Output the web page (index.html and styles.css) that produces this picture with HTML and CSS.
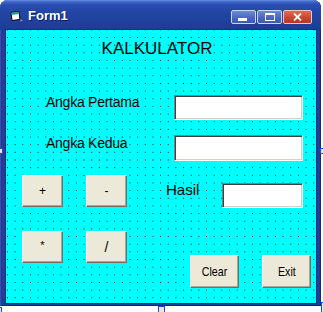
FILE: index.html
```html
<!DOCTYPE html>
<html>
<head>
<meta charset="utf-8">
<title>Form1</title>
<link rel="stylesheet" href="styles.css">
</head>
<body>
<div class="window">
  <div class="titlebar">
    <svg class="app-icon" width="14" height="11" viewBox="0 0 14 11">
      <path d="M1 1.5 L9 0.5 L10 8.5 L2 9.5 Z" fill="#fff" stroke="#000" stroke-width="1"/>
      <path d="M1.2 1.6 L9 0.7 L9.3 3 L1.5 4 Z" fill="#2a9a9a"/>
      <path d="M10.5 8 L13 9.5 L10.5 10.5 Z" fill="#9a9a9a"/>
    </svg>
    <span class="title">Form1</span>
    <div class="caption-btns">
      <div class="cbtn cbtn-min"><span class="glyph-min"></span></div>
      <div class="cbtn cbtn-max"><span class="glyph-max"></span></div>
      <div class="cbtn cbtn-close">
        <svg width="9" height="8" viewBox="0 0 9 8"><path d="M1 0.5 L8 7.5 M8 0.5 L1 7.5" stroke="#fff" stroke-width="1.8"/></svg>
      </div>
    </div>
  </div>
  <div class="client">
    <div class="heading">KALKULATOR</div>
    <div class="row r1">
      <span class="lbl lbl-angka">Angka Pertama</span>
      <div class="tb tb-wide tb-first"></div>
    </div>
    <div class="row r2">
      <span class="lbl lbl-angka">Angka Kedua</span>
      <div class="tb tb-wide tb-tall"></div>
    </div>
    <div class="row r3">
      <button class="btn op">+</button>
      <button class="btn op op-second">-</button>
      <span class="lbl hasil">Hasil</span>
      <div class="tb tb-short"></div>
    </div>
    <div class="row r4">
      <button class="btn op op-star">*</button>
      <button class="btn op op-second op-slash">/</button>
      <button class="btn cmd cmd-clear"><span class="narrow">Clear</span></button>
      <button class="btn cmd cmd-exit"><span class="narrow">Exit</span></button>
    </div>
  </div>
</div>
<div class="handle h-left"></div>
<div class="handle h-right"></div>
<div class="handle h-bottom"></div>
<div class="handle h-bl"></div>
<div class="handle h-br"></div>
</body>
</html>
```
FILE: styles.css
```css
html, body {
  margin: 0;
  padding: 0;
}
body {
  width: 323px;
  height: 312px;
  background: #ffffff;
  position: relative;
  overflow: hidden;
  font-family: "Liberation Sans", Arial, sans-serif;
}
.window {
  width: 321px;
  height: 306px;
  background: #203e98;
  border-radius: 8px 8px 0 0;
  display: flex;
  flex-direction: column;
  box-shadow: inset 1px 0 0 #2f51b0, inset -1px 0 0 #142c78, inset 0 -1px 0 #142c78;
}
.titlebar {
  height: 30px;
  flex: none;
  display: flex;
  align-items: flex-start;
  padding: 0 9px 0 10px;
  border-radius: 8px 8px 0 0;
  background: linear-gradient(to bottom, #6b8fe2 0px, #3c63c8 2px, #2a4db0 5px, #2246a4 12px, #1f409c 22px, #1d3c95 30px);
}
.app-icon {
  margin-top: 11px;
  flex: none;
}
.title {
  margin-top: 8px;
  margin-left: 4px;
  color: #ffffff;
  font-weight: bold;
  font-size: 13px;
  line-height: 15px;
  text-shadow: 1px 1px 0 #0a1e5a;
}
.caption-btns {
  margin-left: auto;
  margin-top: 10px;
  display: flex;
  gap: 1px;
}
.cbtn {
  height: 12px;
  width: 23px;
  border: 1px solid #c9d5f2;
  border-radius: 2px;
  background: linear-gradient(to bottom, #6d8ad6, #4765bd 60%, #3d5bb3);
  display: flex;
  align-items: center;
  justify-content: center;
  position: relative;
}
.cbtn-close {
  width: 27px;
  border-color: #f0c8c0;
  background: linear-gradient(to bottom, #e06a55, #c8442f 60%, #b53726);
}
.glyph-min {
  position: absolute;
  left: 6px;
  top: 7px;
  width: 9px;
  height: 3px;
  background: #ffffff;
}
.glyph-max {
  width: 8px;
  height: 5px;
  border: 1px solid #ffffff;
  border-top-width: 2px;
}
.client {
  flex: 1;
  margin: 0 5px 3px 6px;
  background-color: #00ffff;
  background-image: radial-gradient(circle at 0.5px 0.5px, #000 0.6px, transparent 0.7px);
  background-size: 7.67px 7.67px;
  background-position: 1px 7px;
  box-shadow: 0 0 0 1px #142c78;
  display: flex;
  flex-direction: column;
}
.heading {
  margin-top: 9px;
  height: 20px;
  line-height: 20px;
  font-size: 17px;
  text-align: center;
  padding-right: 8px;
  color: #000;
}
.row {
  display: flex;
  align-items: flex-start;
}
.r1 { margin-top: 35px; }
.r2 { margin-top: 15px; }
.r3 { margin-top: 14px; }
.r4 { margin-top: 23px; }
.lbl {
  font-size: 14px;
  line-height: 16px;
  color: #000;
  flex: none;
}
.lbl-angka {
  margin-left: 40px;
  width: 128px;
  letter-spacing: -0.25px;
}
.tb {
  box-sizing: border-box;
  background: #ffffff;
  border-top: 1px solid #808080;
  border-left: 1px solid #808080;
  border-right: 1px solid #ffffff;
  border-bottom: 1px solid #ffffff;
  box-shadow: inset 1px 1px 0 #404040, inset -1px -1px 0 #d4d0c8;
  flex: none;
}
.tb-wide {
  width: 129px;
  height: 25px;
}
.tb-first { margin-top: 1px; }
.tb-tall { height: 26px; }
.tb-short {
  width: 81px;
  height: 25px;
  margin-left: 25px;
  margin-top: 8px;
}
.hasil {
  margin-left: 39px;
  margin-top: 6px;
  width: 31px;
  font-size: 15px;
  line-height: 17px;
}
.btn {
  box-sizing: border-box;
  flex: none;
  padding: 0;
  margin: 0;
  background: #ece9d8;
  border-top: 1px solid #ffffff;
  border-left: 1px solid #ffffff;
  border-right: 1px solid #716f64;
  border-bottom: 1px solid #716f64;
  box-shadow: inset -1px -1px 0 #aca899;
  color: #000;
  font-family: "Liberation Sans", Arial, sans-serif;
  display: flex;
  align-items: center;
  justify-content: center;
}
.op {
  width: 41px;
  height: 32px;
  font-size: 12px;
  margin-left: 16px;
}
.op-second { margin-left: 23px; }
.op-slash { font-size: 14px; }
.op-star { font-size: 11px; padding-bottom: 4px; }
.cmd {
  width: 49px;
  height: 33px;
  margin-top: 24px;
  font-size: 13px;
}
.narrow {
  display: inline-block;
  transform: scaleX(0.82);
}
.cmd-clear { margin-left: 63px; }
.cmd-exit { margin-left: 23px; }
.handle {
  position: absolute;
  box-sizing: border-box;
  border: 1px solid #1c4fd0;
  background: #e6e6e6;
}
.h-left { left: -3px; top: 148px; width: 6px; height: 6px; }
.h-right { right: -3px; top: 148px; width: 6px; height: 6px; }
.h-bottom { left: 158px; top: 306px; width: 7px; height: 7px; }
.h-bl { left: -4px; top: 307px; width: 6px; height: 6px; }
.h-br { right: -4px; top: 302px; width: 6px; height: 12px; }
```
